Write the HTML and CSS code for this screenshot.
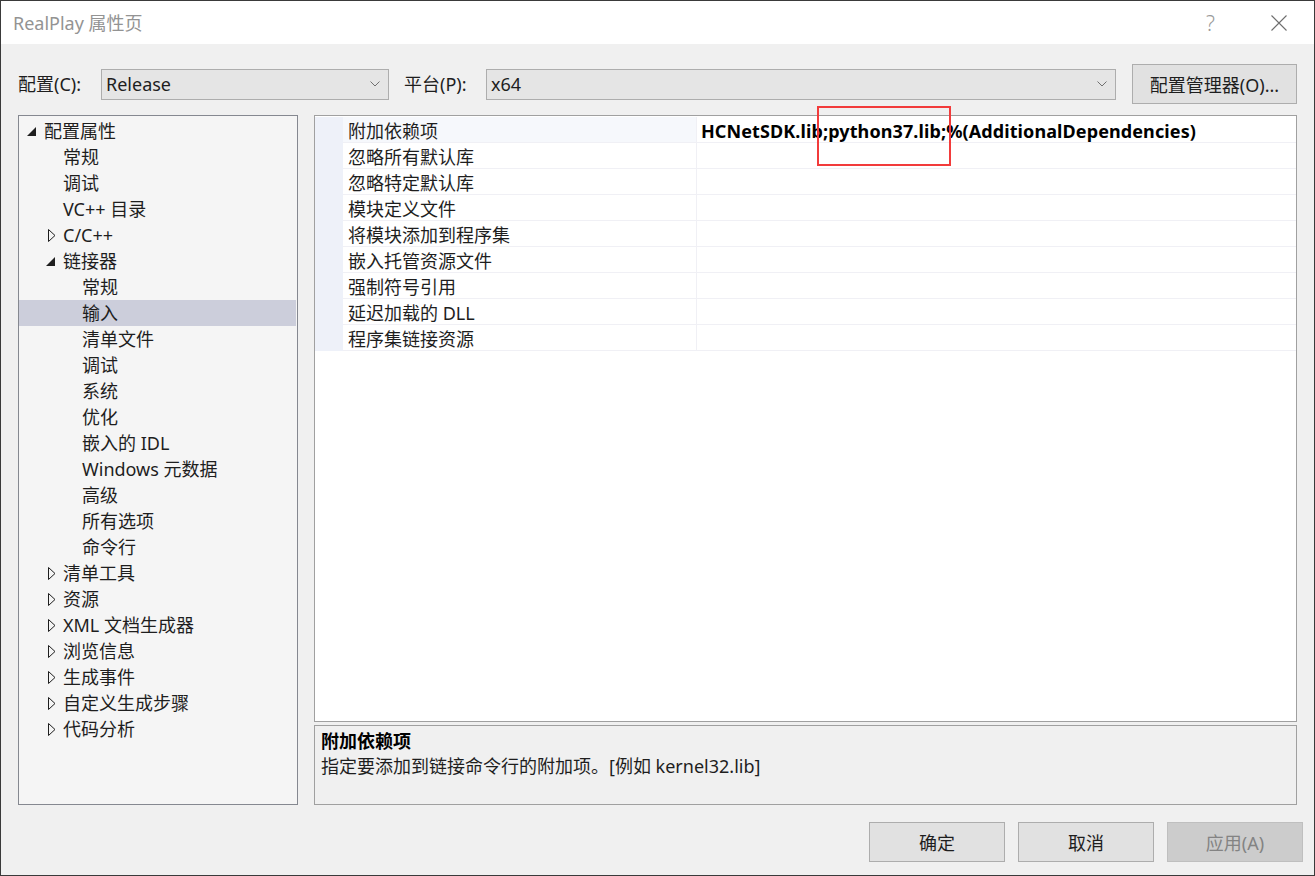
FILE: index.html
```html
<!DOCTYPE html>
<html lang="zh-CN">
<head>
<meta charset="utf-8">
<title>RealPlay 属性页</title>
<link rel="stylesheet" href="styles.css">
</head>
<body>
<div class="window">
  <div class="titlebar">
    <span class="title">RealPlay 属性页</span>
    <div class="title-actions">
      <span class="help">?</span>
      <svg class="close" width="16" height="16" viewBox="0 0 16 16"><path d="M0.5 0.5 L15.5 15.5 M15.5 0.5 L0.5 15.5" stroke="#6e6e6e" stroke-width="1.1" fill="none"/></svg>
    </div>
  </div>

  <div class="config-row">
    <span class="cfg-label cfg-label-config">配置(C):</span>
    <div class="combo combo-config">
      <span class="combo-text">Release</span>
      <svg class="chevron" width="10" height="6" viewBox="0 0 10 6"><polyline points="0.5,0.5 5,5 9.5,0.5" stroke="#707070" fill="none" stroke-width="1"/></svg>
    </div>
    <span class="cfg-label cfg-label-platform">平台(P):</span>
    <div class="combo combo-platform">
      <span class="combo-text">x64</span>
      <svg class="chevron" width="10" height="6" viewBox="0 0 10 6"><polyline points="0.5,0.5 5,5 9.5,0.5" stroke="#707070" fill="none" stroke-width="1"/></svg>
    </div>
    <button class="btn btn-manager">配置管理器(O)...</button>
  </div>

  <div class="main">
    <div class="tree">
      <div class="node lv0"><span class="tog"><svg width="9" height="9" viewBox="0 0 9 9"><polygon points="9,0 9,9 0,9" fill="#1e1e1e"/></svg></span><span class="label">配置属性</span></div>
      <div class="node lv1"><span class="tog"></span><span class="label">常规</span></div>
      <div class="node lv1"><span class="tog"></span><span class="label">调试</span></div>
      <div class="node lv1"><span class="tog"></span><span class="label">VC++ 目录</span></div>
      <div class="node lv1"><span class="tog"><svg class="col" width="8" height="13" viewBox="0 0 8 13"><polygon points="0.5,0.5 7,6.5 0.5,12.5" fill="none" stroke="#1e1e1e" stroke-width="1"/></svg></span><span class="label">C/C++</span></div>
      <div class="node lv1"><span class="tog"><svg width="9" height="9" viewBox="0 0 9 9"><polygon points="9,0 9,9 0,9" fill="#1e1e1e"/></svg></span><span class="label">链接器</span></div>
      <div class="node lv2"><span class="tog"></span><span class="label">常规</span></div>
      <div class="node lv2 selected"><span class="tog"></span><span class="label">输入</span></div>
      <div class="node lv2"><span class="tog"></span><span class="label">清单文件</span></div>
      <div class="node lv2"><span class="tog"></span><span class="label">调试</span></div>
      <div class="node lv2"><span class="tog"></span><span class="label">系统</span></div>
      <div class="node lv2"><span class="tog"></span><span class="label">优化</span></div>
      <div class="node lv2"><span class="tog"></span><span class="label">嵌入的 IDL</span></div>
      <div class="node lv2"><span class="tog"></span><span class="label">Windows 元数据</span></div>
      <div class="node lv2"><span class="tog"></span><span class="label">高级</span></div>
      <div class="node lv2"><span class="tog"></span><span class="label">所有选项</span></div>
      <div class="node lv2"><span class="tog"></span><span class="label">命令行</span></div>
      <div class="node lv1"><span class="tog"><svg class="col" width="8" height="13" viewBox="0 0 8 13"><polygon points="0.5,0.5 7,6.5 0.5,12.5" fill="none" stroke="#1e1e1e" stroke-width="1"/></svg></span><span class="label">清单工具</span></div>
      <div class="node lv1"><span class="tog"><svg class="col" width="8" height="13" viewBox="0 0 8 13"><polygon points="0.5,0.5 7,6.5 0.5,12.5" fill="none" stroke="#1e1e1e" stroke-width="1"/></svg></span><span class="label">资源</span></div>
      <div class="node lv1"><span class="tog"><svg class="col" width="8" height="13" viewBox="0 0 8 13"><polygon points="0.5,0.5 7,6.5 0.5,12.5" fill="none" stroke="#1e1e1e" stroke-width="1"/></svg></span><span class="label">XML 文档生成器</span></div>
      <div class="node lv1"><span class="tog"><svg class="col" width="8" height="13" viewBox="0 0 8 13"><polygon points="0.5,0.5 7,6.5 0.5,12.5" fill="none" stroke="#1e1e1e" stroke-width="1"/></svg></span><span class="label">浏览信息</span></div>
      <div class="node lv1"><span class="tog"><svg class="col" width="8" height="13" viewBox="0 0 8 13"><polygon points="0.5,0.5 7,6.5 0.5,12.5" fill="none" stroke="#1e1e1e" stroke-width="1"/></svg></span><span class="label">生成事件</span></div>
      <div class="node lv1"><span class="tog"><svg class="col" width="8" height="13" viewBox="0 0 8 13"><polygon points="0.5,0.5 7,6.5 0.5,12.5" fill="none" stroke="#1e1e1e" stroke-width="1"/></svg></span><span class="label">自定义生成步骤</span></div>
      <div class="node lv1"><span class="tog"><svg class="col" width="8" height="13" viewBox="0 0 8 13"><polygon points="0.5,0.5 7,6.5 0.5,12.5" fill="none" stroke="#1e1e1e" stroke-width="1"/></svg></span><span class="label">代码分析</span></div>
    </div>

    <div class="right">
      <div class="grid">
        <div class="grow current"><div class="stripe"></div><div class="gname">附加依赖项</div><div class="gval">HCNetSDK.lib;python37.lib;%(AdditionalDependencies)</div></div>
        <div class="grow"><div class="stripe"></div><div class="gname">忽略所有默认库</div><div class="gval"></div></div>
        <div class="grow"><div class="stripe"></div><div class="gname">忽略特定默认库</div><div class="gval"></div></div>
        <div class="grow"><div class="stripe"></div><div class="gname">模块定义文件</div><div class="gval"></div></div>
        <div class="grow"><div class="stripe"></div><div class="gname">将模块添加到程序集</div><div class="gval"></div></div>
        <div class="grow"><div class="stripe"></div><div class="gname">嵌入托管资源文件</div><div class="gval"></div></div>
        <div class="grow"><div class="stripe"></div><div class="gname">强制符号引用</div><div class="gval"></div></div>
        <div class="grow"><div class="stripe"></div><div class="gname">延迟加载的 DLL</div><div class="gval"></div></div>
        <div class="grow"><div class="stripe"></div><div class="gname">程序集链接资源</div><div class="gval"></div></div>
      </div>
      <div class="desc">
        <div class="desc-title">附加依赖项</div>
        <div class="desc-text">指定要添加到链接命令行的附加项。[例如 kernel32.lib]</div>
      </div>
    </div>
  </div>

  <div class="footer">
    <button class="btn btn-dlg">确定</button>
    <button class="btn btn-dlg">取消</button>
    <button class="btn btn-dlg disabled">应用(A)</button>
  </div>

  <div class="highlight-box"></div>
</div>
</body>
</html>
```

FILE: styles.css
```css
* { box-sizing: border-box; }

html, body {
  margin: 0;
  padding: 0;
  background: #f0f0f0;
}

body {
  font-family: "Noto Sans", "Noto Sans CJK SC", sans-serif;
  font-size: 18px;
  color: #1e1e1e;
}

.window {
  position: relative;
  width: 1315px;
  height: 876px;
  border: 1px solid #3a3a3a;
  background: #f0f0f0;
  display: flex;
  flex-direction: column;
  overflow: hidden;
}

/* Title bar */
.titlebar {
  height: 43px;
  flex: none;
  background: #ffffff;
  display: flex;
  align-items: center;
  padding: 0 27px 0 12px;
}

.title {
  color: #939393;
  font-size: 18px;
  line-height: 24px;
}

.title-actions {
  margin-left: auto;
  display: flex;
  align-items: center;
  gap: 56px;
}

.help {
  color: #9a9a9a;
  font-size: 21px;
  line-height: 24px;
  font-weight: 300;
}

.close { display: block; }

/* Config row */
.config-row {
  flex: none;
  height: 40px;
  margin-top: 20px;
  padding: 0 17px;
  display: flex;
  align-items: center;
}

.cfg-label {
  line-height: 24px;
  white-space: nowrap;
}

.cfg-label-config { width: 83px; }

.cfg-label-platform {
  width: 82px;
  margin-left: 15px;
}

.combo {
  height: 31px;
  border: 1px solid #adadad;
  background: #e5e5e5;
  display: flex;
  align-items: center;
  padding: 0 8px 0 4px;
}

.combo-config { width: 288px; }

.combo-platform { width: 630px; }

.combo-text {
  line-height: 24px;
}

.chevron {
  margin-left: auto;
  display: block;
}

.btn {
  font-family: inherit;
  font-size: 18px;
  color: #1e1e1e;
  background: #e1e1e1;
  border: 1px solid #adadad;
  padding: 0;
  height: 40px;
}

.btn-manager {
  width: 165px;
  margin-left: auto;
}

/* Main area */
.main {
  flex: none;
  height: 690px;
  margin-top: 11px;
  padding: 0 17px;
  display: flex;
  gap: 16px;
}

.tree {
  width: 280px;
  flex: none;
  border: 1px solid #858890;
  background: #f5f5f5;
  padding-top: 2px;
}

.node {
  height: 26px;
  display: flex;
  align-items: center;
  white-space: nowrap;
}

.node.lv0 { padding-left: 0; }
.node.lv1 { padding-left: 19px; }
.node.lv2 { padding-left: 38px; }

.node.selected { background: #cccedb; margin-right: 1px; }

.tog {
  width: 25px;
  flex: none;
  height: 26px;
  display: flex;
  align-items: center;
  padding-left: 8px;
}

.tog svg { display: block; }
.tog svg.col { margin-left: 2px; }

.label {
  line-height: 26px;
}

.right {
  flex: 1;
  display: flex;
  flex-direction: column;
  gap: 3px;
}

.grid {
  flex: 1;
  border: 1px solid #a0a0a0;
  background: #ffffff;
  padding-top: 1px;
}

.grow {
  height: 26px;
  display: flex;
}

.stripe {
  width: 28px;
  flex: none;
  background: #eef1f9;
}

.gname {
  width: 354px;
  flex: none;
  padding: 2px 0 0 5px;
  line-height: 24px;
  border-bottom: 1px solid #f0f0f5;
  border-right: 1px solid #f0f0f5;
  white-space: nowrap;
}

.grow.current .gname { background: #f6f8fc; }

.gval {
  flex: 1;
  padding: 2px 0 0 4px;
  line-height: 24px;
  border-bottom: 1px solid #f0f0f5;
  font-weight: 700;
  color: #000000;
  white-space: nowrap;
  letter-spacing: 0.1px;
}

.desc {
  height: 80px;
  flex: none;
  border: 1px solid #a0a0a0;
  background: #f0f0f0;
  padding: 3px 6px 0;
}

.desc-title {
  font-weight: 700;
  line-height: 25px;
  color: #000000;
}

.desc-text {
  line-height: 25px;
}

/* Footer buttons */
.footer {
  flex: none;
  height: 40px;
  margin-top: 17px;
  padding-right: 11px;
  display: flex;
  justify-content: flex-end;
  gap: 13px;
}

.btn-dlg { width: 136px; }

.btn-dlg.disabled {
  background: #cccccc;
  color: #838383;
  border-color: #bfbfbf;
}

/* Annotation box drawn over the screenshot */
.highlight-box {
  position: absolute;
  left: 816px;
  top: 105px;
  width: 134px;
  height: 60px;
  border: 2px solid #f23b3b;
  pointer-events: none;
}
```
